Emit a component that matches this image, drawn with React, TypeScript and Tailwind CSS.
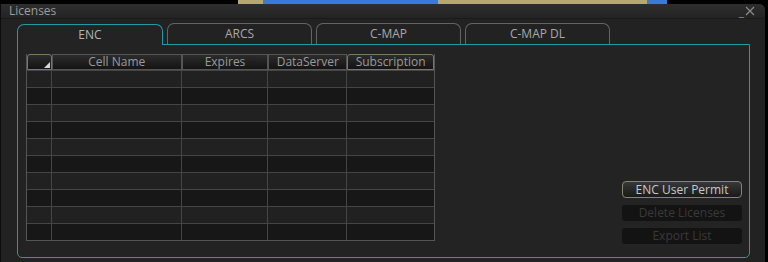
import React from "react";

const rows = Array.from({ length: 10 }, (_, i) => i);
const cols = [
  { label: "", w: "w-[25px]" },
  { label: "Cell Name", w: "w-[130px]" },
  { label: "Expires", w: "w-[87px]" },
  { label: "DataServer", w: "w-[79px]" },
  { label: "Subscription", w: "w-[87px]" },
];

export default function App() {
  const font = { fontFamily: '"Open Sans", "Noto Sans", sans-serif' };
  return (
    <div className="w-[768px] h-[262px] bg-black overflow-hidden flex flex-col" style={font}>
      {/* top colored strip */}
      <div className="h-[4px] flex shrink-0">
        <div className="w-[238px] bg-black" />
        <div className="w-[25px] bg-[#b8a870]" />
        <div className="w-[175px] bg-[#3a7ad8]" />
        <div className="w-[209px] bg-[#b8a870]" />
        <div className="w-[20px] bg-[#3a7ad8]" />
        <div className="flex-1 bg-black" />
      </div>
      <div className="flex flex-1 min-h-0">
        <div className="w-[1px] bg-[#0c0c0c]" />
        <div className="w-[764px] bg-[#222222] rounded-tr-[6px] flex flex-col">
          {/* title bar */}
          <div className="h-[15px] bg-gradient-to-b from-[#2e2e2e] to-[#232323] rounded-tr-[6px] flex items-center pl-[8px] pr-[10px] border-b border-[#1a1a1a]">
            <span className="text-[12px] leading-none text-[#9c9c9c]">Licenses</span>
            <div className="flex-1" />
            <span className="text-[12px] leading-none text-[#8a8a8a] mt-[2px]">_</span>
            <svg width="10" height="10" viewBox="0 0 10 10" className="ml-[1px]">
              <path d="M1 1 L9 9 M9 1 L1 9" stroke="#8a8a8a" strokeWidth="1.2" />
            </svg>
          </div>
          {/* content */}
          <div className="pl-[16px] pt-[4px] flex flex-col">
            <div className="flex gap-[4px] h-[21px] items-end">
              {["ENC", "ARCS", "C-MAP", "C-MAP DL"].map((t, i) => (
                <div
                  key={t}
                  className={
                    i === 0
                      ? "w-[146px] h-[21px] rounded-t-[7px] border border-b-0 border-[#1e9aa8] bg-[#232323] flex items-center justify-center text-[12px] text-[#b4b4b4] relative top-[1px] z-10"
                      : "w-[145px] h-[21px] rounded-t-[7px] border border-b-0 border-[#646464] bg-[#222222] flex items-center justify-center text-[12px] text-[#a8a8a8]"
                  }
                >
                  {t}
                </div>
              ))}
            </div>
            <div className="w-[733px] h-[214px] border border-[#1e9aa8] rounded-b-[5px] bg-[#232323] flex pl-[8px] pt-[9px] pr-[7px] pb-[13px]">
              {/* table */}
              <div className="flex flex-col w-[409px] border-l border-r border-b border-[#555555] self-start">
                <div className="flex h-[16px]">
                  {cols.map((c, i) => (
                    <div
                      key={i}
                      className={
                        c.w +
                        " h-[16px] relative flex items-center justify-center text-[12px] leading-none text-[#9a9a9a] bg-gradient-to-b from-[#2c2c2c] to-[#141414] border " +
                        (i === 0 || i === 4
                          ? "border-[#7a7a5e] rounded-t-[3px]"
                          : "border-[#555555]")
                      }
                    >
                      {c.label}
                      {i === 0 && (
                        <svg width="6" height="6" viewBox="0 0 6 6" className="absolute right-[1px] bottom-[1px]">
                          <path d="M6 0 L6 6 L0 6 Z" fill="#d8d8d8" />
                        </svg>
                      )}
                    </div>
                  ))}
                </div>
                {rows.map((r) => (
                  <div
                    key={r}
                    className={
                      "flex h-[17px] border-t border-[#454545] " +
                      (r % 2 === 0 ? "bg-[#212121]" : "bg-[#171717]")
                    }
                  >
                    {cols.map((c, i) => (
                      <div
                        key={i}
                        className={c.w + (i < 4 ? " border-r border-[#454545]" : "")}
                      />
                    ))}
                  </div>
                ))}
              </div>
              <div className="flex-1" />
              {/* buttons */}
              <div className="flex flex-col justify-end gap-[7px] w-[120px]">
                <div className="h-[17px] rounded-[4px] border border-[#86866a] bg-gradient-to-b from-[#383838] to-[#1a1a1a] flex items-center justify-center text-[12px] leading-none text-[#c8c8c8]">
                  ENC User Permit
                </div>
                <div className="h-[16px] rounded-[3px] bg-[#131313] flex items-center justify-center text-[12px] leading-none text-[#3a3a3a]">
                  Delete Licenses
                </div>
                <div className="h-[16px] rounded-[3px] bg-[#131313] flex items-center justify-center text-[12px] leading-none text-[#3a3a3a]">
                  Export List
                </div>
              </div>
            </div>
          </div>
        </div>
        <div className="flex-1 bg-black" />
      </div>
    </div>
  );
}
